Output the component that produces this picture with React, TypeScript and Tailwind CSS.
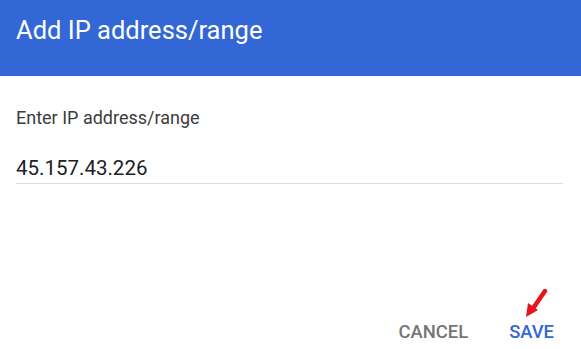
export default function App() {
  return (
    <div className="relative w-[581px] h-[349px] bg-white font-['Roboto',sans-serif]">
      <div className="h-[76px] bg-[#3367d6] px-4 pt-[14px]">
        <h1 className="text-[25.5px] leading-[32px] text-white">Add IP address/range</h1>
      </div>
      <div className="px-4 pt-[30px]">
        <label className="block text-[18px] leading-[24px] text-[#3c3c3c]">Enter IP address/range</label>
        <div className="mt-[25px] w-[547px] border-b border-[#dcdcdc] pb-[2px] text-[20.5px] leading-[26px] text-[#202124]">
          45.157.43.226
        </div>
      </div>
      <div className="absolute bottom-[2px] right-[27px] flex items-center gap-[41px]">
        <button className="h-[30px] text-[18.4px] font-medium text-[#757575]">CANCEL</button>
        <button className="relative h-[30px] text-[18.4px] font-medium text-[#3367d6]">
          SAVE
          <svg className="absolute left-[15px] -top-[28px]" width="24" height="30" viewBox="0 0 24 30">
            <path d="M21 2 L10 18" stroke="#e8141a" strokeWidth="4.5" strokeLinecap="round" />
            <path d="M2 28 L4 14 L14 21 Z" fill="#e8141a" />
          </svg>
        </button>
      </div>
    </div>
  );
}
